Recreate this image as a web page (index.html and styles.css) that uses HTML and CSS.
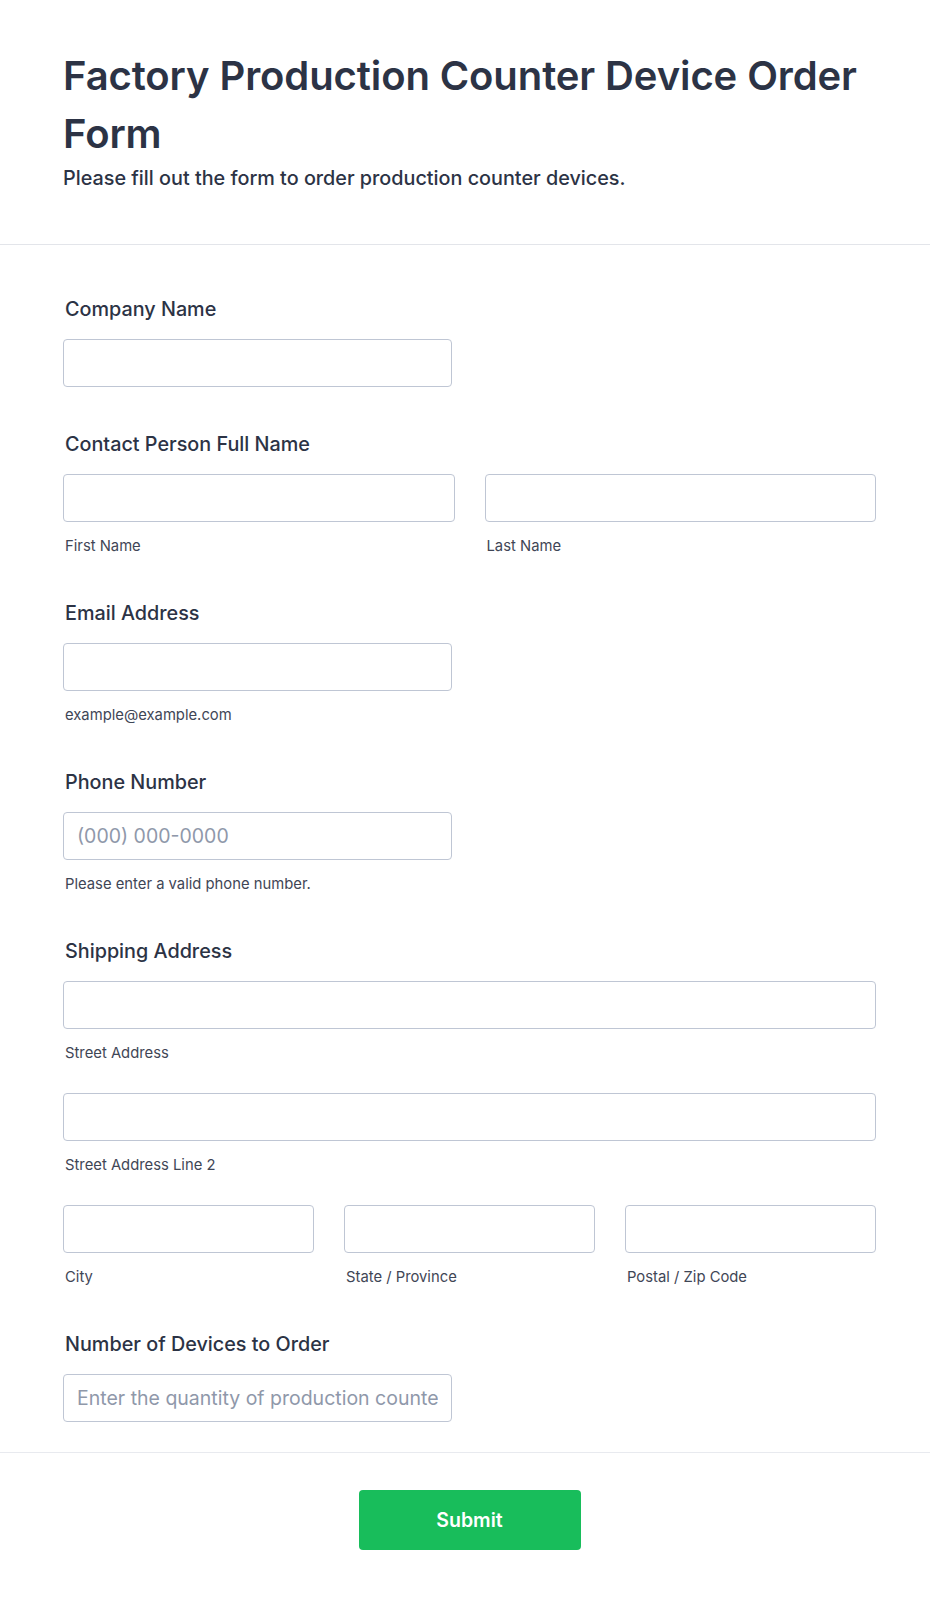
FILE: index.html
```html
<!DOCTYPE html>
<html lang="en">
<head>
<meta charset="UTF-8">
<meta name="viewport" content="width=device-width, initial-scale=1.0">
<title>Factory Production Counter Device Order Form</title>
<link rel="stylesheet" href="styles.css">
</head>
<body>
  <header class="form-header">
    <h1 class="form-title">Factory Production Counter Device Order Form</h1>
    <p class="form-subtitle">Please fill out the form to order production counter devices.</p>
  </header>

  <form class="form-body" onsubmit="return false;">
    <div class="field">
      <label class="field-label" for="company">Company Name</label>
      <input class="field-input half" id="company" type="text">
    </div>

    <div class="field">
      <label class="field-label">Contact Person Full Name</label>
      <div class="row two">
        <div class="col">
          <input class="field-input" type="text">
          <span class="sublabel">First Name</span>
        </div>
        <div class="col">
          <input class="field-input" type="text">
          <span class="sublabel">Last Name</span>
        </div>
      </div>
    </div>

    <div class="field">
      <label class="field-label" for="email">Email Address</label>
      <input class="field-input half" id="email" type="email">
      <span class="sublabel">example@example.com</span>
    </div>

    <div class="field">
      <label class="field-label" for="phone">Phone Number</label>
      <input class="field-input half" id="phone" type="tel" placeholder="(000) 000-0000">
      <span class="sublabel">Please enter a valid phone number.</span>
    </div>

    <div class="field">
      <label class="field-label">Shipping Address</label>
      <div class="col line">
        <input class="field-input" type="text">
        <span class="sublabel">Street Address</span>
      </div>
      <div class="col line">
        <input class="field-input" type="text">
        <span class="sublabel">Street Address Line 2</span>
      </div>
      <div class="row three">
        <div class="col">
          <input class="field-input" type="text">
          <span class="sublabel">City</span>
        </div>
        <div class="col">
          <input class="field-input" type="text">
          <span class="sublabel">State / Province</span>
        </div>
        <div class="col">
          <input class="field-input" type="text">
          <span class="sublabel">Postal / Zip Code</span>
        </div>
      </div>
    </div>

    <div class="field last">
      <label class="field-label" for="qty">Number of Devices to Order</label>
      <input class="field-input half" id="qty" type="number" placeholder="Enter the quantity of production counter devices">
    </div>
  </form>

  <div class="form-footer">
    <button class="submit" type="button">Submit</button>
  </div>
</body>
</html>
```

FILE: styles.css
```css
body {
  font-family: Inter, "Noto Sans", Arial, sans-serif;
  margin: 0;
  padding: 0;
  color: #2c3345;
  background-color: #fff;
}

.form-header {
  padding: 47px 54px 54px 63px;
  border-bottom: 1px solid #e3e5ea;
}

.form-title {
  margin: 0;
  font-size: 40px;
  line-height: 58px;
  font-weight: 600;
  letter-spacing: -0.1px;
}

.form-subtitle {
  margin: 3px 0 0;
  font-size: 19.8px;
  line-height: 24px;
  font-weight: 500;
}

.form-body {
  padding: 52px 54px 30px 63px;
  border-bottom: 1px solid #e8eaef;
}

.field {
  margin-bottom: 45px;
}

.field.last {
  margin-bottom: 0;
}

.field-label {
  display: block;
  padding-left: 2px;
  margin-bottom: 18px;
  font-size: 19.8px;
  line-height: 24px;
  font-weight: 500;
}

.field-input {
  display: block;
  box-sizing: border-box;
  width: 100%;
  height: 48px;
  padding: 0 13px;
  border: 1px solid #bfc6d4;
  border-radius: 4px;
  background-color: #fff;
  font-family: inherit;
  font-size: 19.5px;
  color: #2c3345;
  outline: none;
}

.field-input::placeholder {
  color: #8f98aa;
}

.field-input.half {
  width: 389px;
}

.field-input[type=number] {
  -moz-appearance: textfield;
}

.field-input::-webkit-inner-spin-button,
.field-input::-webkit-outer-spin-button {
  -webkit-appearance: none;
  margin: 0;
}

.sublabel {
  display: block;
  padding-left: 2px;
  margin-top: 14px;
  font-size: 14.8px;
  line-height: 20px;
  color: #3f4656;
}

.row {
  display: grid;
  column-gap: 30px;
}

.row.two {
  grid-template-columns: 1fr 1fr;
}

.row.three {
  grid-template-columns: 1fr 1fr 1fr;
}

.col.line {
  margin-bottom: 30px;
}

.form-footer {
  display: flex;
  justify-content: center;
  padding: 37px 54px 48px 63px;
}

.submit {
  width: 222px;
  height: 60px;
  border: none;
  border-radius: 4px;
  background-color: #18bd5b;
  color: #fff;
  font-family: inherit;
  font-size: 19.5px;
  font-weight: 600;
  cursor: pointer;
}
```
